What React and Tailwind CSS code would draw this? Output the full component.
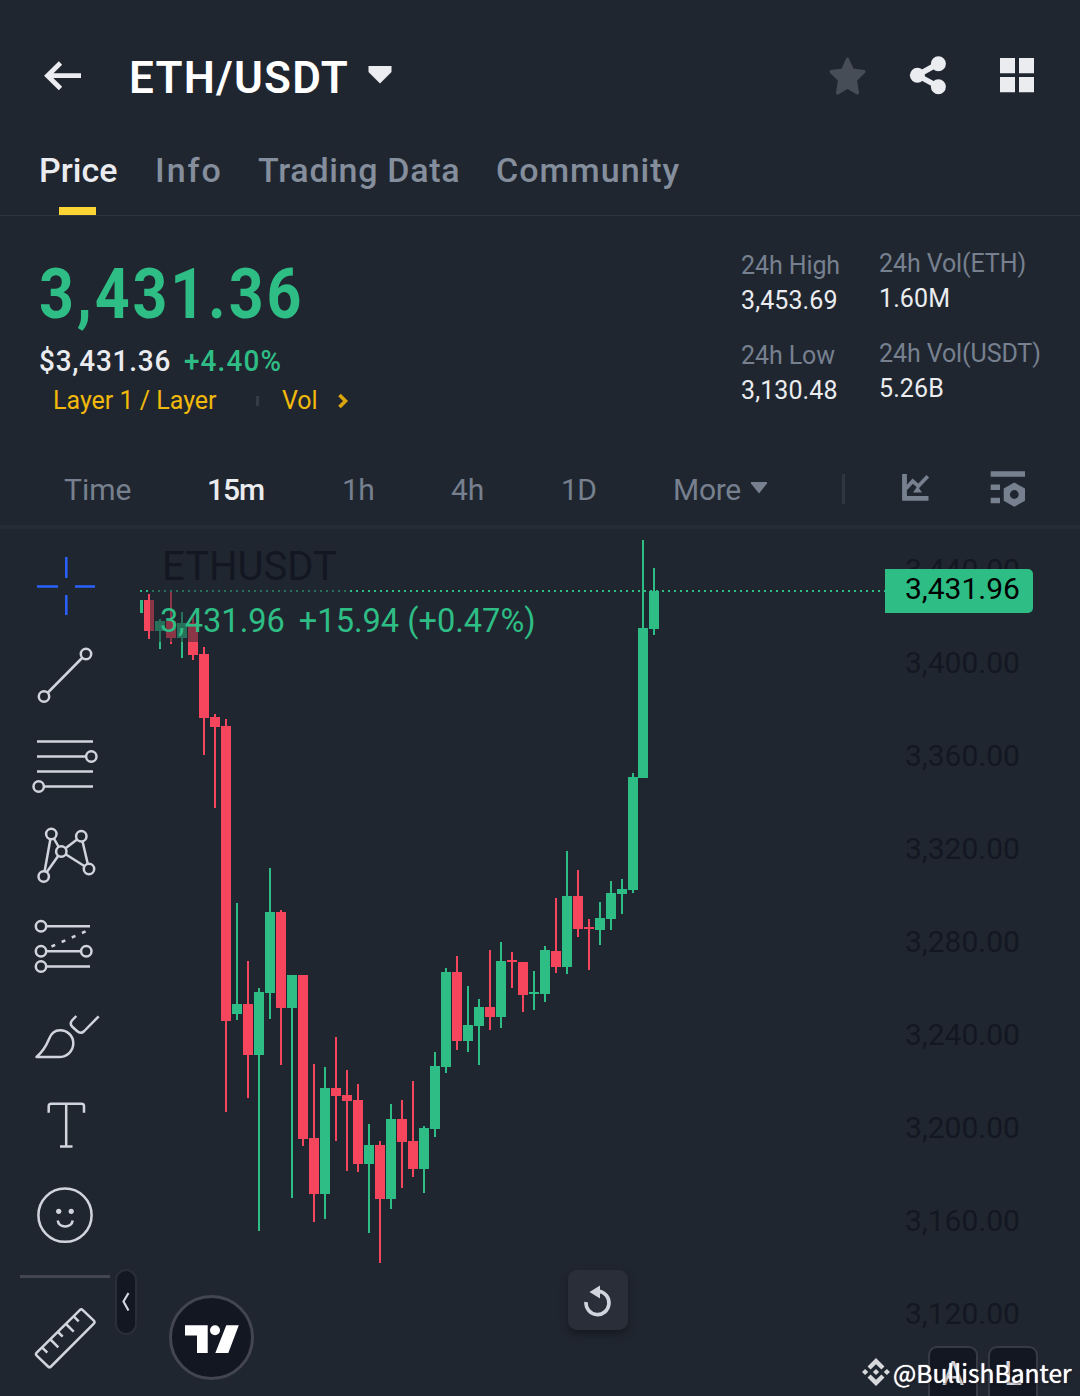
const UP = "#2ebd85";
const DOWN = "#f6465d";
const BG = "#202630";

// [x, high, bodyTop, bodyBottom, low, isUp]
const candles = [
  [144, 594, 600, 631, 639, 0],
  [155, 619, 621, 631, 649, 1],
  [166, 591, 621, 638, 644, 0],
  [177, 612, 623, 638, 658, 1],
  [188, 617, 623, 655, 660, 0],
  [199, 647, 654, 718, 755, 0],
  [210, 714, 717, 727, 808, 0],
  [221, 719, 726, 1021, 1112, 0],
  [232, 903, 1004, 1014, 1020, 1],
  [243, 961, 1004, 1055, 1098, 0],
  [254, 988, 992, 1055, 1231, 1],
  [265, 868, 912, 993, 1019, 1],
  [276, 910, 912, 1008, 1065, 0],
  [287, 975, 975, 1008, 1198, 1],
  [298, 975, 975, 1139, 1146, 0],
  [309, 1064, 1138, 1194, 1222, 0],
  [320, 1067, 1088, 1194, 1219, 1],
  [331, 1037, 1088, 1096, 1141, 0],
  [342, 1070, 1095, 1101, 1171, 0],
  [353, 1084, 1100, 1164, 1172, 0],
  [364, 1124, 1145, 1164, 1233, 1],
  [375, 1141, 1145, 1199, 1263, 0],
  [386, 1104, 1119, 1199, 1209, 1],
  [397, 1100, 1119, 1142, 1188, 0],
  [408, 1081, 1141, 1169, 1177, 0],
  [419, 1126, 1128, 1169, 1193, 1],
  [430, 1052, 1066, 1129, 1137, 1],
  [441, 968, 972, 1067, 1073, 1],
  [452, 956, 972, 1041, 1050, 0],
  [463, 986, 1025, 1041, 1052, 1],
  [474, 999, 1007, 1026, 1065, 1],
  [485, 950, 1007, 1017, 1030, 0],
  [496, 942, 961, 1017, 1028, 1],
  [507, 952, 960, 962, 988, 0],
  [518, 962, 962, 995, 1012, 0],
  [529, 971, 992, 994, 1010, 1],
  [540, 946, 950, 994, 1002, 1],
  [551, 898, 951, 967, 973, 0],
  [562, 851, 896, 967, 974, 1],
  [573, 870, 896, 929, 937, 0],
  [584, 919, 927, 929, 970, 0],
  [595, 902, 918, 930, 945, 1],
  [606, 881, 893, 919, 930, 1],
  [617, 879, 889, 894, 914, 1],
  [628, 773, 777, 890, 893, 1],
  [638, 540, 628, 778, 778, 1],
  [649, 568, 591, 629, 635, 1],
];

const axisLabels = [
  "3,440.00",
  "3,400.00",
  "3,360.00",
  "3,320.00",
  "3,280.00",
  "3,240.00",
  "3,200.00",
  "3,160.00",
  "3,120.00",
];

function Dot({ x, y }) {
  return <circle cx={x} cy={y} r="5.2" fill={BG} />;
}

function Tool({ children, color = "#d1d4dc" }) {
  return (
    <button className="block h-[90px] w-[90px]">
      <svg
        viewBox="0 0 90 90"
        className="h-[90px] w-[90px]"
        fill="none"
        stroke={color}
        strokeWidth="2.5"
        strokeLinejoin="round"
      >
        {children}
      </svg>
    </button>
  );
}

function Header() {
  return (
    <header className="flex h-[150px] items-start pt-[46px] pl-[40px] pr-[42px]">
      <svg viewBox="0 0 46 60" className="h-[60px] w-[46px]" fill="none" stroke="#eaecef" strokeWidth="4.8">
        <path d="M41 29.700H8M20.500 17 7.500 29.700 20.500 42.500" />
      </svg>
      <h1 className="ml-[43px] w-[239px] pt-[2px] whitespace-nowrap text-[44px] leading-[60px] font-semibold tracking-[1.200px] text-white">
        ETH/USDT
      </h1>
      <svg viewBox="0 0 24 60" className="h-[60px] w-[24px]" fill="#eaecef">
        <path d="M.5 20h23v6L12 37.500.5 26z" />
      </svg>
      <div className="ml-auto flex">
        <svg viewBox="0 0 44 60" className="h-[60px] w-[44px]" fill="#474d57" stroke="#474d57" strokeWidth="3" strokeLinejoin="round">
          <path d="m22.500 13 5 11 11.500 1.600-8.500 8.500 2 13-10-5.800-10 5.800 2-13L6 25.600 17.500 24z" />
        </svg>
        <svg viewBox="0 0 44 60" className="ml-[38px] h-[60px] w-[44px]" fill="#eaecef" stroke="#eaecef">
          <path d="M31.400 17.500 10.400 29.300l21 11.400" fill="none" strokeWidth="5.500" />
          <g stroke="none">
            <circle cx="31.400" cy="17.700" r="7.500" />
            <circle cx="10.400" cy="29.300" r="7.500" />
            <circle cx="31.400" cy="40.700" r="7.500" />
          </g>
        </svg>
        <svg viewBox="0 0 44 60" className="ml-[43px] h-[60px] w-[44px]" fill="#eaecef">
          <path d="M6 12h15v15.300H6zM25 12h15v15.300H25zM6 31h15v15.300H6zM25 31h15v15.300H25z" />
        </svg>
      </div>
    </header>
  );
}

function Tabs() {
  return (
    <nav className="flex h-[66px] items-start border-b border-[#2f363f] pl-[38px] text-[34px] leading-[40px] font-medium whitespace-nowrap text-[#848e9c]">
      <div className="flex h-[65px] w-[117px] flex-col">
        <span className="pl-px text-[#eaecef]">Price</span>
        <span className="mt-auto ml-[21px] h-[8px] w-[37px] bg-[#fcd535]" />
      </div>
      <span className="w-[103px] tracking-[2px]">Info</span>
      <span className="w-[238px] tracking-[0.700px]">Trading Data</span>
      <span className="tracking-[1px]">Community</span>
    </nav>
  );
}

function Stat({ label, value }) {
  return (
    <div className="h-[90px] whitespace-nowrap">
      <div className="text-[25px] leading-[36px] tracking-[-0.100px] text-[#76808f]">{label}</div>
      <div className="text-[25px] leading-[34px] tracking-[0.100px] text-[#eaecef]">{value}</div>
    </div>
  );
}

function Summary() {
  return (
    <section className="flex h-[239px]">
      <div className="w-[741px] pl-[39px] whitespace-nowrap">
        <div className="mt-[38px] origin-left scale-x-[0.870] text-[70px] leading-[80px] font-bold tracking-[3.300px] text-[#2ebd85]">
          3,431.36
        </div>
        <div className="mt-[7px] flex text-[30px] leading-[40px] font-medium">
          <span className="w-[145px] origin-left scale-x-[0.930] tracking-[0.850px] text-[#eaecef]">$3,431.36</span>
          <span className="origin-left scale-x-[0.930] tracking-[1.200px] text-[#2ebd85]">+4.40%</span>
        </div>
        <div className="flex h-[40px] items-center pl-[14px] text-[25px] leading-[40px] text-[#f0b90b]">
          <span className="w-[203px]">Layer 1 / Layer</span>
          <span className="h-[10px] w-[3px] bg-[#343b47]" />
          <span className="ml-[23px] w-[55px]">Vol</span>
          <svg viewBox="0 0 12 16" className="h-[16px] w-[12px]" fill="none" stroke="#d9a50a" strokeWidth="3.600">
            <path d="m2.500 2 6 6-6 6" />
          </svg>
        </div>
      </div>
      <div className="w-[138px] pt-[32px]">
        <Stat label="24h High" value="3,453.69" />
        <Stat label="24h Low" value="3,130.48" />
      </div>
      <div className="pt-[30px]">
        <Stat label="24h Vol(ETH)" value="1.60M" />
        <Stat label="24h Vol(USDT)" value="5.26B" />
      </div>
    </section>
  );
}

function Intervals() {
  return (
    <div className="flex h-[74px] items-center border-b-4 border-[#262c36] pb-[2px] pl-[64px] text-[30px] whitespace-nowrap text-[#76808f]">
      <span className="w-[143px]">Time</span>
      <span className="w-[135px] tracking-[-1px] font-medium text-[#eaecef]">15m</span>
      <span className="w-[109px] tracking-[-0.500px]">1h</span>
      <span className="w-[110px]">4h</span>
      <span className="w-[112px] tracking-[-0.500px]">1D</span>
      <span className="w-[78px] tracking-[-0.300px]">More</span>
      <svg viewBox="0 0 16 12" className="mb-[2px] h-[12px] w-[16px]" fill="#76808f">
        <path d="M0 0h16v1.500L8 11.500 0 1.500z" />
      </svg>
      <span className="ml-[75px] h-[30px] w-[3px] bg-[#2f3640]" />
      <svg viewBox="900 467 30 44" className="ml-[55px] h-[44px] w-[30px]" fill="none" stroke="#76808f">
        <path d="M904.500 474v24.300H928.500" strokeWidth="4.800" />
        <path d="m906 488.500 6.700-7.300 5.600 5 9.500-10" strokeWidth="3.800" />
        <path d="m917.500 486 4.500 6.500h-9z" fill="#76808f" stroke="none" />
      </svg>
      <svg viewBox="988 467 40 44" className="ml-[58px] h-[44px] w-[40px]" fill="#76808f">
        <path d="M990.700 471.200H1025v5.600H990.700zM990.700 484.500h9.300v5.600h-9.300zM990.700 497.700h9.300v5.600h-9.300z" />
        <path d="m1014.300 482.500 10.700 6v12.200l-10.700 6-10.600-6v-12.200z" />
        <circle cx="1014.300" cy="494.500" r="4.400" fill={BG} />
      </svg>
    </div>
  );
}

function DrawingTools() {
  return (
    <aside className="relative w-[140px] pt-[12px] pl-[20px]">
      <Tool color="#2962ff">
        <path d="M46.300 16v21M46.300 54v20M17 45.500h21M55 45.500h20" />
      </Tool>
      <Tool>
        <path d="M24 65.500 66 23" />
        <Dot x={66} y={23} />
        <Dot x={24} y={65.5} />
      </Tool>
      <Tool>
        <path d="M17 20.500h56M17 35.500h54M17 50.500h56M19 65.500h54" />
        <Dot x={71.3} y={35.5} />
        <Dot x={18.7} y={65.5} />
      </Tool>
      <Tool>
        <path d="M31.300 23 23.700 65.500 41.300 40.500zM41.300 40.500 61.300 25.300 69 58z" />
        <Dot x={31.3} y={23} />
        <Dot x={61.3} y={25.3} />
        <Dot x={41.3} y={40.5} />
        <Dot x={23.7} y={65.5} />
        <Dot x={69} y={58} />
      </Tool>
      <Tool>
        <path d="M21 25.300h49M21 50.300h45M21 65.500h49" />
        <path d="M31.500 45.500 66.500 30" strokeDasharray="4 7.100" />
        <Dot x={21} y={25.3} />
        <Dot x={21} y={50.3} />
        <Dot x={66.3} y={50.3} />
        <Dot x={21} y={65.5} />
      </Tool>
      <Tool>
        <path d="M40 39.200c7.500 0 13.300 5.800 13.300 13.100C53.300 60 47 66 39 66H16.500C23 60.500 27 53 29 48c2-5.500 5.500-8.800 11-8.800z" />
        <path d="M56.300 25 52 29.500q-2.500 3 0 6l5 4.500q3.700 3.500 7.300 0L78.700 25.300" />
      </Tool>
      <Tool>
        <path d="M28.700 31.700v-6.500q0-2.500 2.500-2.500H61.500q2.500 0 2.500 2.500v6.500M46.200 22.700v42.800M40 65.500h12.500" />
      </Tool>
      <Tool>
        <circle cx="45" cy="44.200" r="26.600" />
        <circle cx="38.700" cy="40.300" r="2.600" fill="#d1d4dc" stroke="none" />
        <circle cx="51.200" cy="40.300" r="2.600" fill="#d1d4dc" stroke="none" />
        <path d="M37.700 49.500c1 8 14 8 15 0" />
      </Tool>
      <div className="mt-[14px] mb-[15px] h-[3px] w-[90px] bg-[#434651]" />
      <Tool>
        <path d="M59.800 17.200q1.500-1.500 3 0l11 10.500q1.500 1.500 0 3L31 73.500q-1.500 1.500-3 0L16.700 62.700q-1.500-1.500 0-3z" />
        <path d="m22.300 54.700 5 5M30.500 46.500l7.800 7.800M38 39l4.700 4.700M46 31l7.700 7.700M53.700 23.300l5 5" />
      </Tool>

      {/* collapse handle sits on the edge between the tools and the plot */}
      <button className="absolute top-[740px] left-[115px] flex h-[66px] w-[22px] items-center justify-center rounded-full border-2 border-[#2a2e39] bg-[#131722]">
        <svg viewBox="0 0 10 22" className="h-[22px] w-[10px] shrink-0" fill="none" stroke="#d1d4dc" strokeWidth="2.200">
          <path d="M7.500 2 2.500 10.500l5 9" />
        </svg>
      </button>
    </aside>
  );
}

function Plot() {
  return (
    <div className="relative w-[745px]">
      <svg viewBox="140 529 745 867" className="h-[867px] w-[745px]" shapeRendering="crispEdges">
        <rect x="140" y="600" width="3" height="13" fill={UP} />
        {candles.map(([x, high, top, bottom, low, up]) => (
          <g key={x} fill={up ? UP : DOWN}>
            <rect x={x + 4} y={high} width="2" height={low - high} />
            <rect x={x} y={top} width="10" height={bottom - top} />
          </g>
        ))}
        <path d="M140 591h745" stroke={UP} strokeWidth="2" strokeDasharray="2 4" />
      </svg>

      <div className="absolute top-[12px] left-[10px] flex flex-col items-start whitespace-nowrap">
        <div className="h-[52px] w-[198px] bg-[#202630]/50 pl-[12px] text-[40px] leading-[52px] text-[#131722]">ETHUSDT</div>
        <div className="h-[49px] w-[398px] bg-[#202630]/50 pl-[10px] text-[32.600px] leading-[57px] text-[#2ebd85]">
          <span>3,431.96</span>
          <span className="ml-[14px]">+15.94 (+0.47%)</span>
        </div>
      </div>

      <div className="absolute top-[766px] left-[29px] flex h-[85px] w-[85px] items-center justify-center rounded-full border-[3px] border-[#434651] bg-[#131722]">
        <svg viewBox="185 1325 54 28" className="mt-[2px] h-[28px] w-[54px]" fill="#fff">
          <path d="M185 1325.200h22.700V1353H197v-17.500h-12zM226.300 1325.200h12.500L228.300 1353h-13z" />
          <circle cx="215" cy="1330.200" r="5" />
        </svg>
      </div>

      <button className="absolute top-[741px] left-[428px] flex h-[60px] w-[60px] items-center justify-center rounded-[9px] bg-[#2a2e39] shadow-[0_4px_8px_rgba(0,0,0,0.35)]">
        <svg viewBox="0 0 60 60" className="h-[60px] w-[60px]" fill="none" stroke="#d1d4dc" strokeWidth="3.600">
          <path d="M18 32a11.500 11.700 0 1 0 13-10.700" />
          <path d="M21.500 22 32 15.500v13z" fill="#d1d4dc" stroke="none" />
        </svg>
      </button>
    </div>
  );
}

function PriceAxis() {
  return (
    <div className="relative w-[195px] pt-[23px] pl-[20px]">
      <div className="flex flex-col gap-[57px] text-[30px] leading-[36px] text-[#131722]">
        {axisLabels.map((label) => (
          <span key={label}>{label}</span>
        ))}
      </div>
      <div className="absolute top-[40px] left-0 h-[44px] w-[148px] rounded-r-[5px] bg-[#2ebd85] pl-[20px] text-[30px] leading-[40px] text-black">
        3,431.96
      </div>
      <div className="absolute top-[817px] left-[43px] flex h-[50px] gap-[10px] overflow-hidden text-[34px] leading-[50px] text-[#d1d4dc]">
        <span className="h-[60px] w-[50px] rounded-[9px] border-2 border-[#363a45] bg-[#131722] text-center">A</span>
        <span className="h-[60px] w-[50px] rounded-[9px] border-2 border-[#363a45] bg-[#131722] text-center">L</span>
      </div>
      <div className="absolute top-[826px] left-[-23px] flex items-center whitespace-nowrap text-white">
        <svg viewBox="0 0 28 28" className="h-[28px] w-[28px]" fill="#d6d8db">
          <path d="m14 0 8.500 8.500-3.100 3.100L14 6.200l-5.400 5.400-3.100-3.100zM14 28l8.500-8.500-3.100-3.100L14 21.800l-5.400-5.400-3.100 3.100zM14 10.900l3.100 3.100-3.100 3.100-3.100-3.100zM3.100 10.900 6.200 14l-3.100 3.100L0 14zM24.900 10.900 28 14l-3.100 3.100-3.100-3.100z" />
        </svg>
        <span className="relative top-px ml-[3px] -mt-[2px] text-[24.600px] leading-[36px] font-['Noto_Sans_CJK_SC',sans-serif] [text-shadow:0_0_1px_#fff,1px_1px_2px_rgba(0,0,0,0.5)]">
          @BullishBanter
        </span>
      </div>
    </div>
  );
}

export default function App() {
  return (
    <div className="h-[1396px] w-[1080px] overflow-hidden bg-[#202630] font-['Roboto',sans-serif]">
      <Header />
      <Tabs />
      <Summary />
      <Intervals />
      <main className="flex h-[867px]">
        <DrawingTools />
        <Plot />
        <PriceAxis />
      </main>
    </div>
  );
}
